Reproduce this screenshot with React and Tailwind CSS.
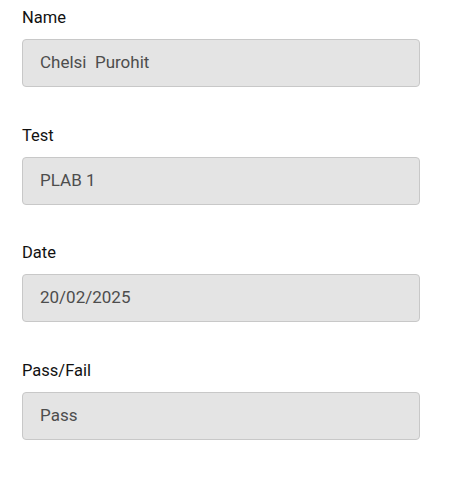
const fields = [
  { label: 'Name', value: 'Chelsi  Purohit' },
  { label: 'Test', value: 'PLAB 1' },
  { label: 'Date', value: '20/02/2025' },
  { label: 'Pass/Fail', value: 'Pass' },
];

export default function App() {
  return (
    <div className="w-[474px] h-[488px] bg-white pt-[8px] pl-[22px]" style={{ fontFamily: 'Roboto, "Noto Sans", sans-serif' }}>
      {fields.map((f) => (
        <div key={f.label} className="mb-[38.6px]">
          <label className="block text-[16.5px] leading-[20px] text-[#111] mb-[11px]">{f.label}</label>
          <div className="w-[398px] h-[48px] flex items-center pl-[17px] bg-[#e4e4e4] border border-[#c8c8c8] rounded-[4px]">
            <span className="text-[17px] text-[#4d4d4d] whitespace-pre">{f.value}</span>
          </div>
        </div>
      ))}
    </div>
  );
}
